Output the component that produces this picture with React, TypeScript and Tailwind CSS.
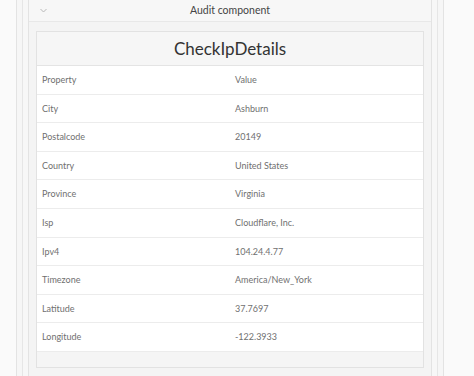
import React from "react";

const rows: [string, string][] = [
  ["Property", "Value"],
  ["City", "Ashburn"],
  ["Postalcode", "20149"],
  ["Country", "United States"],
  ["Province", "Virginia"],
  ["Isp", "Cloudflare, Inc."],
  ["Ipv4", "104.24.4.77"],
  ["Timezone", "America/New_York"],
  ["Latitude", "37.7697"],
  ["Longitude", "-122.3933"],
];

export default function App() {
  return (
    <div
      className="w-[474px] h-[376px] overflow-hidden bg-[#fafafa] flex"
      style={{ fontFamily: "Lato, 'Open Sans', sans-serif" }}
    >
      <div className="ml-[16px] w-[428px] h-full border-x border-[#e3e3e3] bg-[#f6f6f6] px-[5px]">
        <div className="h-full border-x border-[#e6e6e6] bg-[#f7f7f7] px-[5px]">
          <div className="h-full border-x border-[#e3e3e3] bg-[#f4f4f4] flex flex-col">
            <div className="h-[22px] shrink-0 relative flex items-center justify-center bg-[#f7f7f7] border-b border-[#e8e8e8]">
              <svg
                className="absolute left-[11px] top-[8px]"
                width="7"
                height="5"
                viewBox="0 0 7 5"
              >
                <path d="M0.5 1 L3.5 4 L6.5 1" fill="none" stroke="#b8b8b8" strokeWidth="1" />
              </svg>
              <span className="text-[10.5px] text-[#444]">Audit component</span>
            </div>
            <div className="px-[7px] pt-[9px]">
              <div className="border border-[#e2e2e2] bg-[#f5f5f5]">
                <div className="h-[34px] flex items-center justify-center border-b border-[#e4e4e4] bg-[#f6f6f6]">
                  <span className="text-[17px] text-[#333]">CheckIpDetails</span>
                </div>
                <div className="bg-white">
                  {rows.map(([k, v]) => (
                    <div
                      key={k}
                      className="h-[28.6px] flex items-center border-b border-[#ececec] text-[9px] text-[#707070]"
                    >
                      <div className="w-[198px] pl-[5px]">{k}</div>
                      <div>{v}</div>
                    </div>
                  ))}
                </div>
                <div className="h-[15px] bg-[#f5f5f5]" />
              </div>
            </div>
          </div>
        </div>
      </div>
    </div>
  );
}
